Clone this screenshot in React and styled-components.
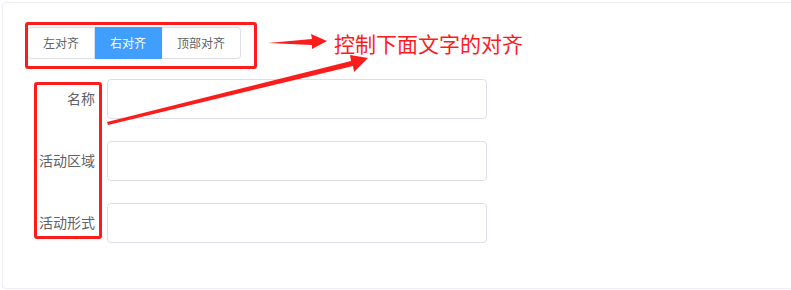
import React, { useState } from "react";
import styled, { createGlobalStyle } from "styled-components";

const GlobalStyle = createGlobalStyle`
  html, body {
    margin: 0;
    padding: 0;
    background: #ffffff;
    overflow: hidden;
  }
  body {
    font-family: "Noto Sans CJK SC", "Noto Sans", sans-serif;
  }
`;

const Page = styled.div`
  position: relative;
  width: 791px;
  height: 290px;
  padding: 2px 0 0 2px;
  box-sizing: border-box;
`;

const Card = styled.div`
  box-sizing: border-box;
  width: 800px;
  height: 287px;
  border: 1px solid #ebeef5;
  border-right: none;
  border-radius: 4px 0 0 4px;
  padding: 24px 24px;
  background: #fff;
`;

const RadioGroup = styled.div`
  display: inline-flex;
  margin-bottom: 20px;
`;

const RadioButton = styled.button`
  height: 32px;
  padding: 0 15px;
  font-family: inherit;
  font-size: 12px;
  line-height: 30px;
  border: 1px solid ${(p) => (p.active ? "#409eff" : "#dcdfe6")};
  border-left-width: ${(p) => (p.first ? "1px" : "0")};
  background: ${(p) => (p.active ? "#409eff" : "#fff")};
  color: ${(p) => (p.active ? "#fff" : "#606266")};
  border-radius: ${(p) =>
    p.first ? "4px 0 0 4px" : p.last ? "0 4px 4px 0" : "0"};
  cursor: pointer;
  outline: none;
`;

const Form = styled.div`
  display: flex;
  flex-direction: column;
  gap: 22px;
`;

const FormItem = styled.div`
  display: flex;
  align-items: center;
`;

const Label = styled.label`
  width: 80px;
  box-sizing: border-box;
  padding: 0 12px 2px 0;
  text-align: right;
  font-size: 14px;
  color: #606266;
  line-height: 38px;
`;

const Input = styled.input`
  box-sizing: border-box;
  width: 380px;
  height: 40px;
  border: 1px solid #dcdfe6;
  border-radius: 4px;
  padding: 0 15px;
  font-family: inherit;
  font-size: 14px;
  color: #606266;
  outline: none;
`;

const MarkBox = styled.div`
  position: absolute;
  box-sizing: border-box;
  border: 3px solid #fb1c1c;
  border-radius: 3px;
  pointer-events: none;
`;

const Note = styled.div`
  position: absolute;
  left: 334px;
  top: 31px;
  font-size: 21px;
  line-height: 24px;
  color: #fb1c1c;
  white-space: nowrap;
  pointer-events: none;
`;

const Arrows = styled.svg`
  position: absolute;
  left: 0;
  top: 0;
  pointer-events: none;
`;

const options = ["左对齐", "右对齐", "顶部对齐"];
const fields = ["名称", "活动区域", "活动形式"];

export default function App() {
  const [align, setAlign] = useState(1);

  return (
    <>
      <GlobalStyle />
      <Page>
        <Card>
          <RadioGroup>
            {options.map((opt, i) => (
              <RadioButton
                key={opt}
                active={align === i}
                first={i === 0}
                last={i === options.length - 1}
                onClick={() => setAlign(i)}
              >
                {opt}
              </RadioButton>
            ))}
          </RadioGroup>
          <Form>
            {fields.map((f) => (
              <FormItem key={f}>
                <Label>{f}</Label>
                <Input />
              </FormItem>
            ))}
          </Form>
        </Card>

        <MarkBox style={{ left: 25, top: 22, width: 232, height: 47 }} />
        <MarkBox style={{ left: 34, top: 82, width: 68, height: 157 }} />
        <Note>控制下面文字的对齐</Note>
        <Arrows width="791" height="290" viewBox="0 0 791 290">
          <polygon
            fill="#fb1c1c"
            points="268,43 312,39 311,34 327,41 312,49 312,45"
          />
          <polygon
            fill="#fb1c1c"
            points="107,122 108,125 353,66 354,72 368,58 350,55 351,61"
          />
        </Arrows>
      </Page>
    </>
  );
}
